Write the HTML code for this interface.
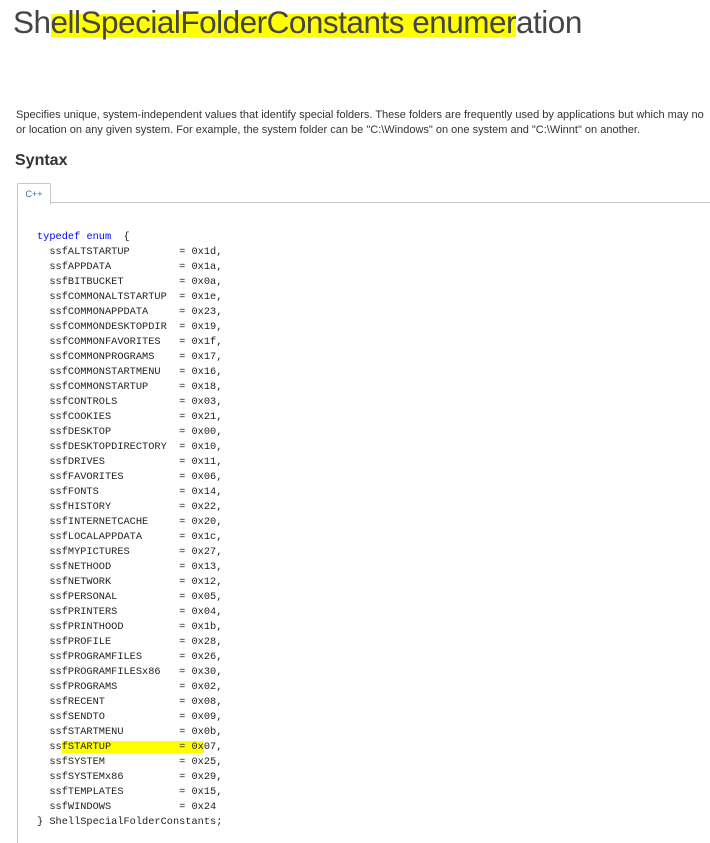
<!DOCTYPE html>
<html><head><meta charset="utf-8"><style>
body{margin:0;width:710px;height:832px;overflow:hidden;background:#fff;font-family:"Liberation Sans",sans-serif;color:#222;}
h1{position:absolute;left:13px;top:0;margin:0;font-weight:normal;font-size:31.5px;color:#454545;letter-spacing:-0.5px;white-space:nowrap;line-height:44px}
h1 span{background:linear-gradient(to bottom,transparent 10px,#ffff00 10px,#ffff00 33px,transparent 33px)}
p{position:absolute;left:16px;top:108px;margin:0;font-size:11px;line-height:15px;white-space:nowrap;color:#333}
h2{position:absolute;left:15px;top:152px;margin:0;font-size:16px;font-weight:bold;color:#333}
.box{position:absolute;left:17px;top:202px;width:700px;height:640px;border-left:1px solid #c8c8c8;border-top:1px solid #c8c8c8}
.tab{position:absolute;left:17px;top:183px;width:32px;height:20px;border:1px solid #c8c8c8;border-bottom:1px solid #fff;border-radius:2px 2px 0 0;background:#fff;font-size:9px;color:#3a6ea5;text-align:center;line-height:20px;z-index:2}
pre{position:absolute;left:37px;top:230px;margin:0;font-family:"Liberation Mono",monospace;font-size:10.3px;line-height:15px;color:#222}
.k{color:#0000ff}
.y{background:#ffff00}
</style></head><body>
<h1>Sh<span>ellSpecialFolderConstants enumer</span>ation</h1>
<p>Specifies unique, system-independent values that identify special folders. These folders are frequently used by applications but which may no<br>or location on any given system. For example, the system folder can be "C:\Windows" on one system and "C:\Winnt" on another.</p>
<h2>Syntax</h2>
<div class="box"></div>
<div class="tab">C++</div>
<pre><span class="k">typedef</span> <span class="k">enum</span>  {
  ssfALTSTARTUP        = 0x1d,
  ssfAPPDATA           = 0x1a,
  ssfBITBUCKET         = 0x0a,
  ssfCOMMONALTSTARTUP  = 0x1e,
  ssfCOMMONAPPDATA     = 0x23,
  ssfCOMMONDESKTOPDIR  = 0x19,
  ssfCOMMONFAVORITES   = 0x1f,
  ssfCOMMONPROGRAMS    = 0x17,
  ssfCOMMONSTARTMENU   = 0x16,
  ssfCOMMONSTARTUP     = 0x18,
  ssfCONTROLS          = 0x03,
  ssfCOOKIES           = 0x21,
  ssfDESKTOP           = 0x00,
  ssfDESKTOPDIRECTORY  = 0x10,
  ssfDRIVES            = 0x11,
  ssfFAVORITES         = 0x06,
  ssfFONTS             = 0x14,
  ssfHISTORY           = 0x22,
  ssfINTERNETCACHE     = 0x20,
  ssfLOCALAPPDATA      = 0x1c,
  ssfMYPICTURES        = 0x27,
  ssfNETHOOD           = 0x13,
  ssfNETWORK           = 0x12,
  ssfPERSONAL          = 0x05,
  ssfPRINTERS          = 0x04,
  ssfPRINTHOOD         = 0x1b,
  ssfPROFILE           = 0x28,
  ssfPROGRAMFILES      = 0x26,
  ssfPROGRAMFILESx86   = 0x30,
  ssfPROGRAMS          = 0x02,
  ssfRECENT            = 0x08,
  ssfSENDTO            = 0x09,
  ssfSTARTMENU         = 0x0b,
  ss<span class="y">fSTARTUP           = 0x</span>07,
  ssfSYSTEM            = 0x25,
  ssfSYSTEMx86         = 0x29,
  ssfTEMPLATES         = 0x15,
  ssfWINDOWS           = 0x24
} ShellSpecialFolderConstants;</pre>
</body></html>
